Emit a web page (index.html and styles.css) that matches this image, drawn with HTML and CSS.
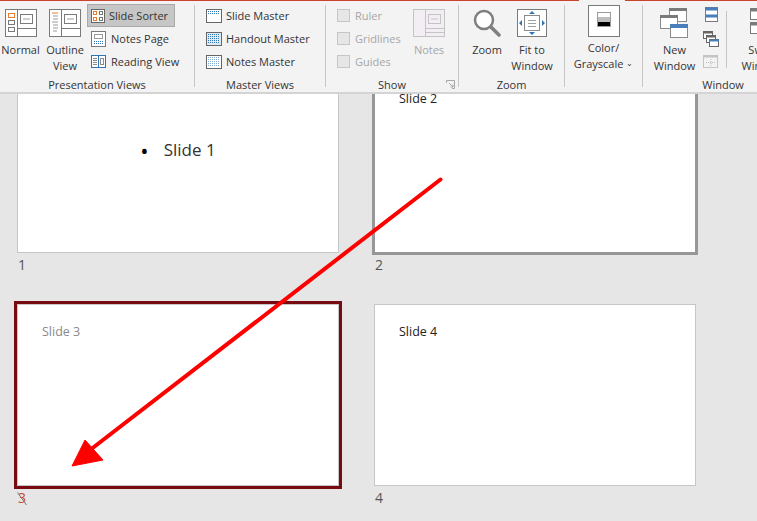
FILE: index.html
```html
<!DOCTYPE html>
<html lang="en">
<head>
<meta charset="utf-8">
<title>Slide Sorter</title>
<link rel="stylesheet" href="styles.css">
</head>
<body>
<div class="tabline"><div class="red r1"></div><div class="tabgap"></div><div class="red r2"></div></div>
<div class="ribbon">
  <section class="group g1">
    <div class="tools">
      <div class="big w-normal">
        <svg class="ic i-normal" width="32" height="28" viewBox="0 0 32 28"><g fill="#fff" stroke="#7a7a7a"><rect x=".5" y=".5" width="31" height="27"/><path d="M12.5 .5v27M12.5 19.5h19" fill="none"/><rect x="15.5" y="5.5" width="12" height="9"/><rect x="3.5" y="4.5" width="6" height="4" stroke="#ed7d31"/><rect x="3.5" y="11.5" width="6" height="4"/><rect x="3.5" y="18.5" width="6" height="4"/></g><path d="M18 10h7" stroke="#a0a0a0"/></svg>
        <span class="lbl">Normal</span>
      </div>
      <div class="big w-outline">
        <svg class="ic i-normal" width="32" height="28" viewBox="0 0 32 28"><g fill="#fff" stroke="#7a7a7a"><rect x=".5" y=".5" width="31" height="27"/><path d="M12.5 .5v27M12.5 19.5h19" fill="none"/><rect x="15.5" y="5.5" width="12" height="9"/></g><path d="M3 4h6" stroke="#ed7d31"/><path d="M4 7h5M4 10h5M3 13h6M4 16h5M4 19h5M4 22h4" stroke="#9a9a9a"/><path d="M18 10h7" stroke="#a0a0a0"/></svg>
        <span class="lbl">Outline<br>View</span>
      </div>
      <div class="stack">
        <div class="row row-sel">
          <svg width="14" height="14" viewBox="0 0 14 14"><rect x=".5" y=".5" width="13" height="13" fill="#fff" stroke="#666"/><rect x="2.5" y="2.5" width="3" height="3" fill="#fff" stroke="#ed7d31"/><rect x="8.5" y="2.5" width="3" height="3" fill="#fff" stroke="#777"/><rect x="2.5" y="8.5" width="3" height="3" fill="#fff" stroke="#ed7d31"/><rect x="8.5" y="8.5" width="3" height="3" fill="#fff" stroke="#777"/></svg>
          <span>Slide Sorter</span>
        </div>
        <div class="row">
          <svg width="15" height="16" viewBox="0 0 15 16"><rect x=".5" y=".5" width="14" height="15" fill="#fff" stroke="#7a7a7a"/><rect x="3.5" y="3.5" width="8" height="4" fill="#fff" stroke="#999"/><path d="M3 10.500h9M3 12.500h9" stroke="#2e75b6" stroke-dasharray="1 1"/></svg>
          <span>Notes Page</span>
        </div>
        <div class="row">
          <svg width="15" height="13" viewBox="0 0 15 13"><rect x=".5" y=".5" width="14" height="12" fill="#fff" stroke="#2e75b6"/><path d="M7.500 1v11" stroke="#2e75b6"/><path d="M2 3.500h4M2 5.500h4M2 7.500h4M2 9.500h4" stroke="#8a8a8a"/><rect x="9.500" y="3.500" width="3" height="6" fill="#fff" stroke="#8a8a8a"/></svg>
          <span>Reading View</span>
        </div>
      </div>
    </div>
    <div class="glabel">Presentation Views</div>
  </section>
  <div class="sep"></div>
  <section class="group g2">
    <div class="stack">
      <div class="row row-m">
        <svg width="16" height="14" viewBox="0 0 16 14"><rect x=".5" y=".5" width="15" height="13" fill="#fff" stroke="#666"/><path d="M2 2.500h12M2 4.500h12" stroke="#2e75b6" stroke-dasharray="1 1"/></svg>
        <span>Slide Master</span>
      </div>
      <div class="row row-m">
        <svg width="16" height="14" viewBox="0 0 16 14"><rect x=".5" y=".5" width="15" height="13" fill="#deebf7" stroke="#666"/><path d="M2 2.500h12M2 4.500h12M2 6.500h12M2 8.500h12M2 10.500h12" stroke="#2e75b6" stroke-dasharray="1 1"/></svg>
        <span>Handout Master</span>
      </div>
      <div class="row row-m">
        <svg width="16" height="14" viewBox="0 0 16 14"><rect x=".5" y=".5" width="15" height="13" fill="#fff" stroke="#666"/><path d="M2 2.500h12M2 4.500h12M2 6.500h12M2 8.500h12M2 10.500h12" stroke="#7fa8cf" stroke-dasharray="1 1"/></svg>
        <span>Notes Master</span>
      </div>
    </div>
    <div class="glabel">Master Views</div>
  </section>
  <div class="sep"></div>
  <section class="group g3">
    <div class="tools show">
      <div class="stack">
        <div class="row row-c"><span class="check"></span><span>Ruler</span></div>
        <div class="row row-c"><span class="check"></span><span>Gridlines</span></div>
        <div class="row row-c"><span class="check"></span><span>Guides</span></div>
      </div>
      <div class="big off w-notes">
        <svg class="ic i-notes" width="32" height="28" viewBox="0 0 32 28"><g fill="#f3eef3" stroke="#c4c4c4"><rect x=".5" y=".5" width="31" height="27"/><path d="M12.500 .5v27M12.500 19.500h19M12.500 23.500h19" fill="none"/><rect x="15.500" y="5.500" width="12" height="9"/></g><path d="M18 10h7" stroke="#c4c4c4"/></svg>
        <span class="lbl">Notes</span>
      </div>
    </div>
    <div class="glabel">Show</div>
    <svg class="launcher" width="9" height="9" viewBox="0 0 9 9"><path d="M.5 3V.5H8.500V8.500H6M3 3l4 4M4.500 7H7V4.500" fill="none" stroke="#a8a8a8"/></svg>
  </section>
  <div class="sep"></div>
  <section class="group g4">
    <div class="tools">
      <div class="big w-zoom">
        <svg class="ic" width="28" height="28" viewBox="0 0 28 28"><circle cx="11" cy="11" r="9" fill="#fff" stroke="#7f7f7f" stroke-width="2.500"/><path d="M18 18l8 8" stroke="#7f7f7f" stroke-width="3.500" stroke-linecap="round"/></svg>
        <span class="lbl">Zoom</span>
      </div>
      <div class="big w-fit">
        <svg class="ic" width="30" height="28" viewBox="0 0 30 28"><rect x=".5" y=".5" width="29" height="27" fill="#fff" stroke="#7a7a7a"/><rect x="7.500" y="6.500" width="15" height="15" fill="#fff" stroke="#8a8a8a"/><path d="M11 11.500h8M11 14.500h8M11 17.500h8" stroke="#a0a0a0"/><path d="M15 2l3 3h-6zM15 26l3-3h-6zM2 14l3-3v6zM28 14l-3-3v6z" fill="#2e75b6"/></svg>
        <span class="lbl">Fit to<br>Window</span>
      </div>
    </div>
    <div class="glabel">Zoom</div>
  </section>
  <div class="sep"></div>
  <section class="group g5">
    <div class="big w-color">
      <svg class="i-color" width="32" height="32" viewBox="0 0 32 32"><rect x=".5" y=".5" width="31" height="31" fill="#fff" stroke="#7a7a7a"/><rect x="9" y="12" width="14" height="5" fill="#bdbdbd"/><rect x="9" y="17" width="14" height="5" fill="#000"/><rect x="9.500" y="7.500" width="13" height="14" fill="none" stroke="#9a9a9a"/></svg>
      <span class="lbl">Color/<br>Grayscale <i class="caret">⌄</i></span>
    </div>
  </section>
  <div class="sep"></div>
  <section class="group g6">
    <div class="tools">
      <div class="big w-new">
        <svg class="ic i-new" width="30" height="30" viewBox="0 0 30 30"><rect x="9.500" y=".5" width="17" height="13" fill="#fff" stroke="#8a8a8a"/><path d="M9 1.500h18" stroke="#7a7a7a" stroke-width="3"/><rect x=".5" y="7.500" width="17" height="13" fill="#fff" stroke="#8a8a8a"/><path d="M0 8.500h18" stroke="#7a7a7a" stroke-width="3"/><rect x="10.500" y="16.500" width="17" height="13" fill="#fff" stroke="#8a8a8a"/><path d="M10 18h18" stroke="#4a7ebb" stroke-width="4"/></svg>
        <span class="lbl">New<br>Window</span>
      </div>
      <div class="mini">
        <svg width="13" height="15" viewBox="0 0 13 15"><rect x=".5" y=".5" width="12" height="14" fill="#fff" stroke="#7a7a7a"/><path d="M0 2h13M0 9h13" stroke="#4a7ebb" stroke-width="3"/></svg>
        <svg width="16" height="16" viewBox="0 0 16 16"><rect x=".5" y=".5" width="9" height="7" fill="#fff" stroke="#666"/><path d="M0 1.500h10" stroke="#666" stroke-width="2"/><rect x="3.500" y="4.500" width="9" height="7" fill="#fff" stroke="#666"/><path d="M3 5.500h10" stroke="#666" stroke-width="2"/><rect x="6.500" y="8.500" width="9" height="7" fill="#fff" stroke="#666"/><path d="M6 9.500h10" stroke="#4a7ebb" stroke-width="2"/></svg>
        <svg width="16" height="13" viewBox="0 0 16 13"><rect x=".5" y=".5" width="14" height="12" fill="#f3f3f3" stroke="#c4c4c4"/><path d="M0 1.500h15" stroke="#c4c4c4" stroke-width="2"/><path d="M3 7.500h10M8 4v7" stroke="#bcbcbc" stroke-dasharray="1 1"/></svg>
      </div>
      <div class="minisep"></div>
      <div class="big w-switch">
        <svg class="ic i-new" width="30" height="30" viewBox="0 0 30 30"><rect x=".5" y=".5" width="29" height="11" fill="#fff" stroke="#7a7a7a"/><path d="M0 2h30" stroke="#7a7a7a" stroke-width="3"/><rect x=".5" y="14.500" width="29" height="11" fill="#fff" stroke="#7a7a7a"/><path d="M0 16h30" stroke="#7a7a7a" stroke-width="3"/></svg>
        <span class="lbl">Switch<br>Windows</span>
      </div>
    </div>
    <div class="glabel gl-window">Window</div>
  </section>
</div>
<main class="sorter">
  <div class="slides">
    <figure class="cell">
      <div class="slide center"><span class="bullet">•</span><span class="big-text">Slide 1</span></div>
      <figcaption>1</figcaption>
    </figure>
    <figure class="cell">
      <div class="slide sel-grey"><span class="title">Slide 2</span></div>
      <figcaption>2</figcaption>
    </figure>
    <figure class="cell">
      <div class="slide sel-red"><span class="title dim">Slide 3</span></div>
      <figcaption class="struck">3</figcaption>
    </figure>
    <figure class="cell">
      <div class="slide"><span class="title">Slide 4</span></div>
      <figcaption>4</figcaption>
    </figure>
  </div>
</main>
<svg class="arrow" width="757" height="521" viewBox="0 0 757 521"><path d="M440.500 179.500L90 450" stroke="#f00" stroke-width="4" stroke-linecap="round"/><path d="M72 466L85 440L103 460z" fill="#f00" stroke="#f00" stroke-linejoin="round"/><path d="M17.500 492.500L26.500 505" stroke="#777" stroke-width="1"/></svg>
</body>
</html>
```
FILE: styles.css
```css
* { box-sizing: border-box; }
html, body { margin: 0; height: 100%; }
body {
  width: 757px;
  height: 521px;
  overflow: hidden;
  position: relative;
  background: #e6e6e6;
  font-family: "Open Sans", "Noto Sans", sans-serif;
  font-size: 11px;
  color: #333;
}
.tabline { display: flex; height: 1px; background: #f3f3f3; }
.red { background: #c8442a; height: 1px; }
.r1 { width: 579px; }
.tabgap { width: 46px; }
.r2 { flex: 1; }
.ribbon {
  display: flex;
  height: 93px;
  background: #f3f3f3;
  border-bottom: 2px solid #d4d4d4;
  overflow: hidden;
}
.sep { width: 1px; margin: 4px 0 5px; background: #c6c6c6; flex: none; }
.group {
  display: flex;
  flex-direction: column;
  flex: none;
  position: relative;
  padding-top: 3px;
}
.g1 { width: 194px; }
.g2 { width: 130px; padding-left: 11px; }
.g3 { width: 132px; padding-left: 11px; }
.g4 { width: 105px; }
.g5 { width: 77px; }
.g6 { flex: 1; }
.tools { display: flex; height: 73px; }
.stack { display: flex; flex-direction: column; height: 73px; }
.glabel {
  position: absolute;
  left: 0;
  right: 0;
  top: 76px;
  text-align: center;
  line-height: 16px;
  white-space: nowrap;
}
.gl-window { right: auto; width: 160px; }
.big {
  display: flex;
  flex-direction: column;
  align-items: center;
  flex: none;
  text-align: center;
  white-space: nowrap;
}
.ic { margin-top: 5px; margin-bottom: 5px; flex: none; }
.lbl { line-height: 16px; }
.w-normal { width: 41px; }
.w-outline { width: 44px; margin-left: 2px; }
.off { color: #a6a6a6; }
.w-notes { width: 32px; }
.w-zoom { width: 46px; margin-left: 5px; }
.w-fit { width: 44px; }
.w-color { width: 77px; padding-top: 1px; }
.i-color { margin-bottom: 3px; flex: none; }
.caret { font-style: normal; font-size: 8px; position: relative; top: -2px; }
.w-new { width: 57px; margin-left: 3px; }
.i-new { margin-top: 4px; margin-bottom: 3px; }
.w-switch { width: 62px; margin-left: 7px; }
.i-new + .lbl { margin-top: 1px; }
.mini {
  display: flex;
  flex-direction: column;
  align-items: center;
  justify-content: space-between;
  width: 16px;
  height: 64px;
  padding-top: 3px;
}
.minisep { width: 1px; height: 57px; margin: 7px 0 0 7px; background: #c6c6c6; }
.row {
  display: flex;
  align-items: center;
  height: 23px;
  gap: 5px;
  white-space: nowrap;
  padding-left: 4px;
}
.row svg { flex: none; }
.row-sel {
  background: #c6c6c6;
  border: 1px solid #a9a9a9;
  gap: 4px;
  padding-left: 3px;
  width: 88px;
}
.row-m { gap: 4px; padding-left: 0; }
.row-c { color: #a6a6a6; padding-left: 0; gap: 5px; width: 76px; }
.check {
  width: 13px;
  height: 13px;
  background: #e6e6e6;
  border: 1px solid #c6c6c6;
  flex: none;
}
.launcher { position: absolute; right: 3px; bottom: 3px; }
.sorter { height: 427px; overflow: hidden; }
.slides {
  display: grid;
  grid-template-columns: 322px 322px;
  column-gap: 35px;
  margin: -23px 0 0 17px;
}
.cell { margin: 0; height: 233px; }
.slide {
  height: 182px;
  background: #fff;
  border: 1px solid #c6c6c6;
  padding: 19px 24px;
  font-size: 12.500px;
  color: #222;
  line-height: 16px;
}
.center {
  display: flex;
  justify-content: center;
  align-items: center;
  padding: 0 0 24px;
  gap: 15px;
  font-size: 17px;
}
.bullet { font-size: 22px; color: #000; }
.big-text { color: #333; line-height: 22px; }
.title { display: block; }
.dim { color: #8a8a8a; }
.sel-grey { outline: 3px solid #979797; outline-offset: -1px; }
.sel-red { outline: 3px solid #780a12; }
figcaption { font-size: 14px; line-height: 18px; margin-top: 3px; padding-left: 1px; color: #555; }
.struck { color: #c8502d; }
.arrow { position: absolute; left: 0; top: 0; pointer-events: none; }
```
